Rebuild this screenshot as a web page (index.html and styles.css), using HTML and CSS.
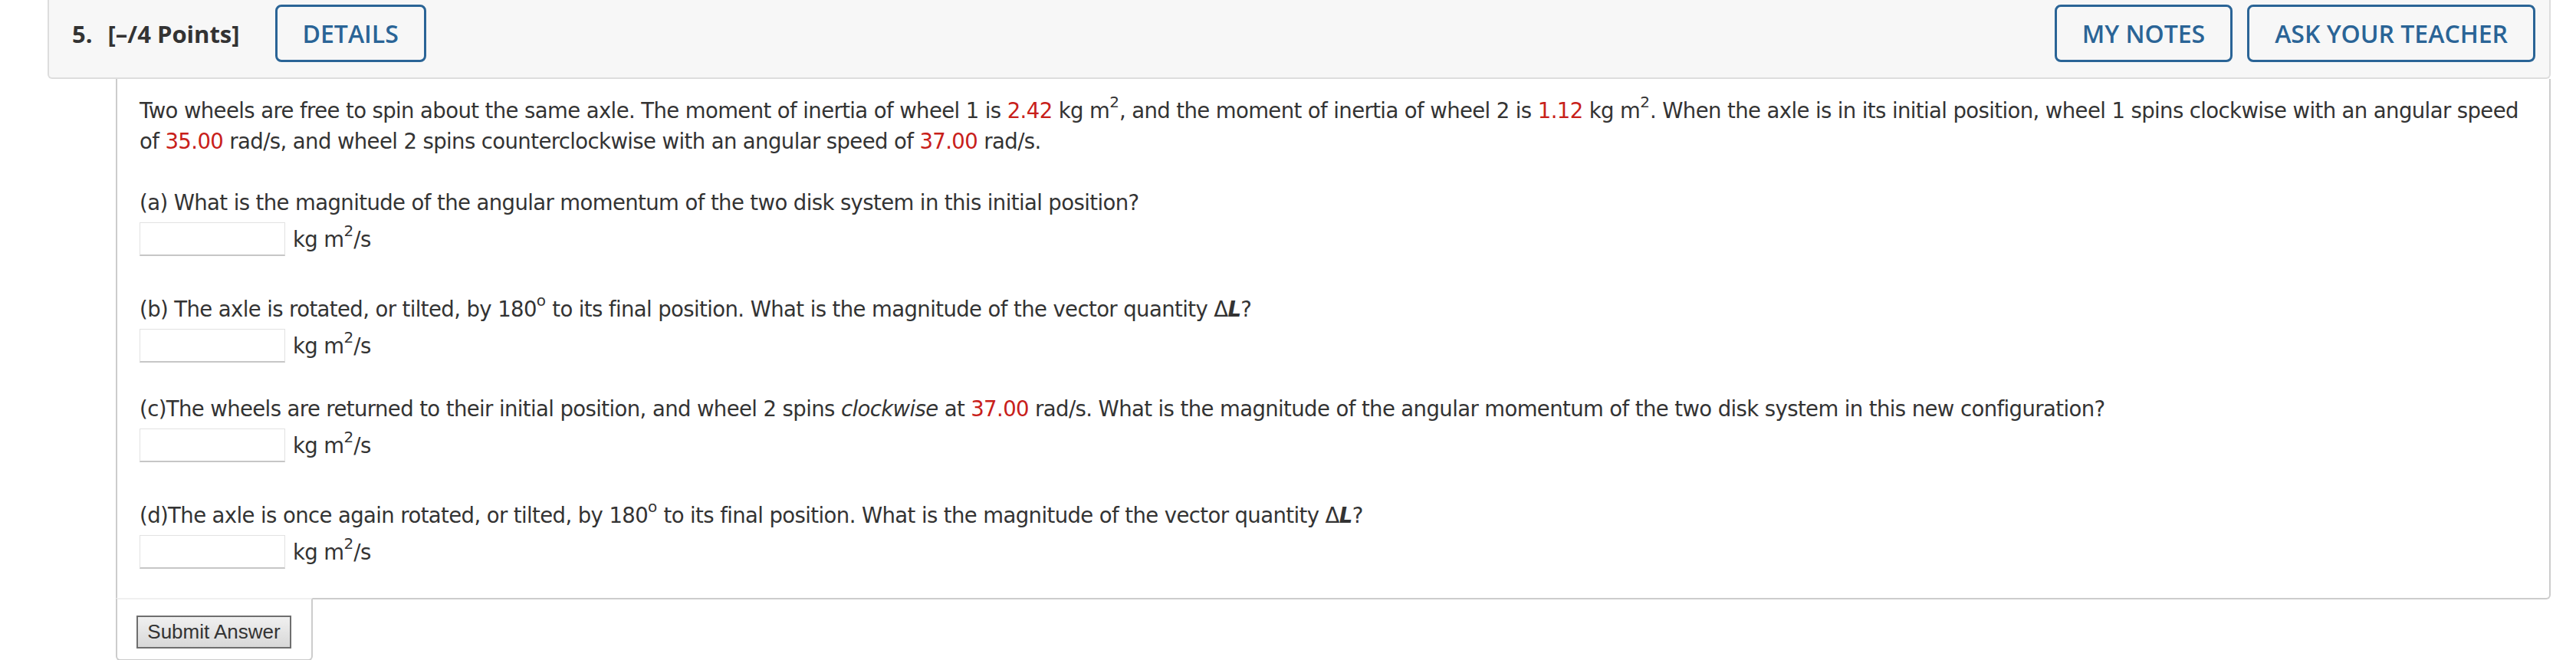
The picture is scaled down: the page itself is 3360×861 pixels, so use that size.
FILE: index.html
```html
<!DOCTYPE html>
<html lang="en">
<head>
<meta charset="utf-8">
<title>Question 5</title>
<link rel="stylesheet" href="styles.css">
</head>
<body>
<div class="page">
  <div class="qheader">
    <div class="qtitle"><span class="qnum">5.</span><span class="qpts">[–/4 Points]</span></div>
    <button class="hbtn details">DETAILS</button>
    <div class="spacer"></div>
    <button class="hbtn">MY NOTES</button>
    <button class="hbtn">ASK YOUR TEACHER</button>
  </div>
  <div class="qbody">
    <p class="intro">Two wheels are free to spin about the same axle. The moment of inertia of wheel 1 is <span class="num">2.42</span> kg m<sup>2</sup>, and the moment of inertia of wheel 2 is <span class="num">1.12</span> kg m<sup>2</sup>. When the axle is in its initial position, wheel 1 spins clockwise with an angular speed of <span class="num">35.00</span> rad/s, and wheel 2 spins counterclockwise with an angular speed of <span class="num">37.00</span> rad/s.</p>

    <div class="part">
      <p class="ptext">(a) What is the magnitude of the angular momentum of the two disk system in this initial position?</p>
      <div class="answer"><input class="ans" type="text"><span class="unit">kg m<sup>2</sup>/s</span></div>
    </div>

    <div class="part">
      <p class="ptext">(b) The axle is rotated, or tilted, by 180<sup>o</sup> to its final position. What is the magnitude of the vector quantity Δ<b><i>L</i></b>?</p>
      <div class="answer"><input class="ans" type="text"><span class="unit">kg m<sup>2</sup>/s</span></div>
    </div>

    <div class="part">
      <p class="ptext">(c)The wheels are returned to their initial position, and wheel 2 spins <i>clockwise</i> at <span class="num">37.00</span> rad/s. What is the magnitude of the angular momentum of the two disk system in this new configuration?</p>
      <div class="answer"><input class="ans" type="text"><span class="unit">kg m<sup>2</sup>/s</span></div>
    </div>

    <div class="part">
      <p class="ptext">(d)The axle is once again rotated, or tilted, by 180<sup>o</sup> to its final position. What is the magnitude of the vector quantity Δ<b><i>L</i></b>?</p>
      <div class="answer"><input class="ans" type="text"><span class="unit">kg m<sup>2</sup>/s</span></div>
    </div>
  </div>
  <div class="submitbar">
    <button class="submit">Submit Answer</button>
  </div>
</div>
</body>
</html>
```
FILE: styles.css
```css
html, body {
  margin: 0;
  padding: 0;
  background: #ffffff;
}

.page {
  margin-left: 62px;
  width: 3265px;
}

.qheader {
  display: flex;
  align-items: center;
  background: #f7f7f7;
  border: 2px solid #dddddd;
  border-top: none;
  border-radius: 0 0 6px 6px;
  padding: 6px 18px 20px 30px;
  box-sizing: border-box;
  height: 103px;
}

.qtitle {
  font-family: "Open Sans", sans-serif;
  font-weight: 700;
  font-size: 31px;
  color: #333333;
  margin-right: 46px;
  white-space: nowrap;
}

.qnum {
  margin-right: 20px;
}

.spacer {
  flex: 1;
}

.hbtn {
  font-family: "Open Sans", sans-serif;
  font-weight: 600;
  font-size: 32px;
  color: #2a6496;
  background: #f7f7f7;
  border: 3px solid #2a6496;
  border-radius: 8px;
  height: 75px;
  padding: 0 33px;
  box-sizing: border-box;
  margin: 0;
}

.hbtn + .hbtn {
  margin-left: 19px;
}

.qbody {
  margin-left: 89px;
  border: 2px solid #cccccc;
  border-top: none;
  border-radius: 0 0 6px 0;
  padding: 12px 28px 38px 29px;
  font-family: "DejaVu Sans", Verdana, sans-serif;
  font-size: 27.5px;
  letter-spacing: -0.6px;
  line-height: 40px;
  color: #333333;
}

.qbody p {
  margin: 0;
}

.num {
  color: #c8201a;
}

sup {
  font-size: 20px;
  line-height: 36px;
  vertical-align: 14px;
  letter-spacing: 0;
}

.unit sup {
  line-height: 0;
}

.part {
  margin-top: 40px;
}

.answer {
  display: flex;
  align-items: center;
  margin-top: 6px;
}

.ans {
  width: 190px;
  height: 44px;
  box-sizing: border-box;
  border: 1px solid #e2e2e2;
  border-bottom: 2px solid #c6c6c6;
  background: #ffffff;
  margin: 0;
  padding: 0 6px;
  font-family: "DejaVu Sans", sans-serif;
  font-size: 26px;
}

.unit {
  margin-left: 10px;
}

.submitbar {
  margin-left: 89px;
  width: 257px;
  height: 82px;
  box-sizing: border-box;
  border: 2px solid #cccccc;
  border-top: 2px solid #f0f0f0;
  border-radius: 0 0 6px 6px;
  margin-top: -2px;
  background: #ffffff;
  position: relative;
  padding: 21px 0 0 25px;
}

.submit {
  font-family: "Liberation Sans", Arial, sans-serif;
  font-size: 26px;
  color: #333333;
  width: 202px;
  height: 43px;
  box-sizing: border-box;
  border: 2px solid #6e6e6e;
  border-radius: 0;
  background: linear-gradient(#f0f0f0, #d8d8d8);
  padding: 0;
  margin: 0;
}
```
